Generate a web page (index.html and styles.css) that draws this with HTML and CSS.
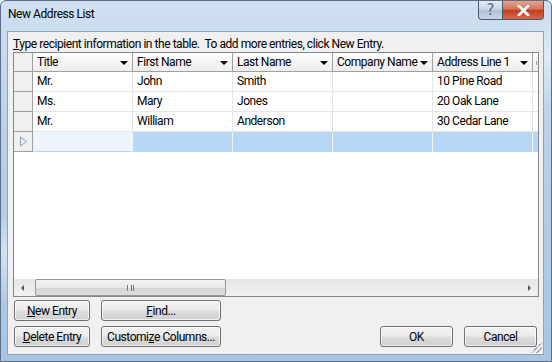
FILE: index.html
```html
<!DOCTYPE html>
<html lang="en">
<head>
  <meta charset="UTF-8" />
  <title>New Address List</title>
  <link rel="stylesheet" href="styles.css">
</head>
<body>
  <div class="window">
    <div class="titlebar">
      <span class="title">New Address List</span>
      <div class="caption-buttons">
        <div class="cap help">?</div>
        <div class="cap close">
          <svg width="13" height="11" viewBox="0 0 13 11">
            <path d="M2 1 L11 10 M11 1 L2 10" stroke="#fff" stroke-width="2.6" stroke-linecap="square"/>
          </svg>
        </div>
      </div>
    </div>

    <div class="client">
      <p class="hint"><u>T</u>ype recipient information in the table.&nbsp; To add more entries, click New Entry.</p>

      <div class="grid">
        <div class="grid-view">
          <div class="row head">
            <div class="cell rowhead"></div>
            <div class="cell col">Title<span class="arrow"></span></div>
            <div class="cell col">First Name<span class="arrow"></span></div>
            <div class="cell col">Last Name<span class="arrow"></span></div>
            <div class="cell col">Company Name<span class="arrow"></span></div>
            <div class="cell col">Address Line 1<span class="arrow"></span></div>
            <div class="cell col rest"><span class="cut-mark"></span></div>
          </div>
          <div class="row">
            <div class="cell rowhead"></div>
            <div class="cell col">Mr.</div>
            <div class="cell col">John</div>
            <div class="cell col">Smith</div>
            <div class="cell col"></div>
            <div class="cell col">10 Pine Road</div>
            <div class="cell col rest"></div>
          </div>
          <div class="row">
            <div class="cell rowhead"></div>
            <div class="cell col">Ms.</div>
            <div class="cell col">Mary</div>
            <div class="cell col">Jones</div>
            <div class="cell col"></div>
            <div class="cell col">20 Oak Lane</div>
            <div class="cell col rest"></div>
          </div>
          <div class="row">
            <div class="cell rowhead"></div>
            <div class="cell col">Mr.</div>
            <div class="cell col">William</div>
            <div class="cell col">Anderson</div>
            <div class="cell col"></div>
            <div class="cell col">30 Cedar Lane</div>
            <div class="cell col rest"></div>
          </div>
          <div class="row new">
            <div class="cell rowhead">
              <svg width="9" height="11" viewBox="0 0 9 11">
                <path d="M1.5 1 L7.5 5.5 L1.5 10 Z" fill="none" stroke="#8a9bb3" stroke-width="1"/>
              </svg>
            </div>
            <div class="cell col current"></div>
            <div class="cell col"></div>
            <div class="cell col"></div>
            <div class="cell col"></div>
            <div class="cell col"></div>
            <div class="cell col rest"></div>
          </div>
        </div>

        <div class="hscroll">
          <div class="sb-btn"><span class="tri left"></span></div>
          <div class="sb-track">
            <div class="sb-thumb"><span class="grip"></span></div>
          </div>
          <div class="sb-btn"><span class="tri right"></span></div>
        </div>
      </div>

      <div class="actions">
        <div class="left-actions">
          <button class="btn small"><u>N</u>ew Entry</button>
          <button class="btn wide"><u>F</u>ind...</button>
          <button class="btn small"><u>D</u>elete Entry</button>
          <button class="btn wide">Customi<u>z</u>e Columns...</button>
        </div>
        <div class="right-actions">
          <button class="btn ok">OK</button>
          <button class="btn ok">Cancel</button>
        </div>
      </div>
      <div class="grip-corner"></div>
    </div>
  </div>
</body>
</html>
```

FILE: styles.css
```css
* {
  margin: 0;
  padding: 0;
  box-sizing: border-box;
}
body {
  font-family: Roboto, "Noto Sans", "Liberation Sans", sans-serif;
  font-size: 12px;
  letter-spacing: -0.45px;
  color: #000;
  background: #fff;
  width: 552px;
  height: 362px;
  overflow: hidden;
}

/* рамка окна в стиле Vista */
.window {
  width: 552px;
  height: 362px;
  border: 1px solid #5c6f86;
  border-radius: 6px 6px 0 0;
  background:
    linear-gradient(160deg, rgba(255,255,255,0) 0%, rgba(255,255,255,0) 38%, rgba(255,255,255,0.45) 45%, rgba(255,255,255,0) 55%),
    linear-gradient(180deg, #cfe0f1 0%, #b8d0e8 40%, #a9c5e2 100%);
  display: flex;
  flex-direction: column;
}

.titlebar {
  height: 30px;
  display: flex;
  align-items: flex-start;
  justify-content: space-between;
  padding-left: 7px;
}
.title {
  margin-top: 6px;
  font-size: 12px;
  color: #000;
}
.caption-buttons {
  display: flex;
  margin-right: 7px;
}
.cap {
  height: 19px;
  border: 1px solid #4a5a6e;
  border-top: none;
  display: flex;
  align-items: center;
  justify-content: center;
}
.help {
  width: 24px;
  border-radius: 0 0 0 4px;
  border-right: none;
  background: linear-gradient(180deg, #e3ebf4 0%, #c6d3e1 50%, #aebfd3 51%, #c9d7e6 100%);
  color: #5a6b80;
  font-size: 15px;
  font-family: "DejaVu Sans", sans-serif;
  letter-spacing: 0;
}
.close {
  width: 42px;
  border-radius: 0 0 4px 0;
  background: linear-gradient(180deg, #e7a48f 0%, #d4755a 45%, #c0401f 52%, #d6684a 100%);
}

/* клиентская область */
.client {
  position: relative;
  flex: 1;
  margin: 0 7px 6px 6px;
  border: 1px solid #8ea3bd;
  background: #f0f0f0;
  padding: 4px 4px 0 5px;
}
.hint {
  height: 16px;
  line-height: 16px;
  white-space: nowrap;
}

/* таблица адресов */
.grid {
  height: 245px;
  border: 1px solid #828790;
  background: #fff;
  display: flex;
  flex-direction: column;
}
.grid-view {
  flex: 1;
  overflow: hidden;
}
.row {
  display: flex;
  height: 20px;
}
.row.head {
  height: 19px;
}
.cell {
  flex: none;
  height: 100%;
  border-right: 1px solid #e6e6e6;
  border-bottom: 1px solid #e6e6e6;
  padding-left: 4px;
  line-height: 19px;
  white-space: nowrap;
  overflow: hidden;
}
.col {
  width: 100px;
}
.col.rest {
  width: 20px;
  border-right: none;
}
.rowhead {
  width: 19px;
  padding: 0;
  background: #f0f0f0;
  border-right: 1px solid #a0a0a0;
  border-bottom: 1px solid #a0a0a0;
  display: flex;
  align-items: center;
  justify-content: center;
}
.head .cell {
  background: linear-gradient(180deg, #ffffff 0%, #f5f5f5 50%, #ededed 100%);
  border-right: 1px solid #a0a0a0;
  border-bottom: 1px solid #a0a0a0;
  position: relative;
  line-height: 18px;
}
.head .rowhead {
  background: #f0f0f0;
}
.cut-mark {
  position: absolute;
  left: 3px;
  top: 8px;
  width: 1px;
  height: 4px;
  background: #999;
}
.arrow {
  position: absolute;
  right: 4px;
  top: 8px;
  width: 0;
  height: 0;
  border-left: 4px solid transparent;
  border-right: 4px solid transparent;
  border-top: 4px solid #000;
}
.row.new .col {
  background: #b8d6f6;
  border-right-color: #f3f8fd;
  border-bottom-color: #b8d6f6;
}
.row.new .col.current {
  background: #eef4fc;
}

/* горизонтальная полоса прокрутки */
.hscroll {
  height: 17px;
  display: flex;
  background: linear-gradient(180deg, #e6e6e6 0%, #f2f2f2 100%);
}
.sb-btn {
  width: 17px;
  display: flex;
  align-items: center;
  justify-content: center;
}
.tri {
  width: 0;
  height: 0;
  border-top: 3px solid transparent;
  border-bottom: 3px solid transparent;
}
.tri.left {
  border-right: 3px solid #555;
}
.tri.right {
  border-left: 3px solid #555;
}
.sb-track {
  flex: 1;
  padding: 0 0 0 4px;
}
.sb-thumb {
  width: 191px;
  height: 17px;
  border: 1px solid #979797;
  border-radius: 2px;
  background: linear-gradient(180deg, #f3f3f3 0%, #e8e8e8 50%, #d6d6d6 51%, #dcdcdc 100%);
  display: flex;
  align-items: center;
  justify-content: center;
}
.grip {
  width: 7px;
  height: 6px;
  border-left: 1px solid #777;
  border-right: 1px solid #777;
  background: linear-gradient(90deg, transparent 3px, #777 3px, #777 4px, transparent 4px);
}

/* кнопки */
.actions {
  display: flex;
  justify-content: space-between;
  margin-top: 3px;
}
.left-actions {
  display: grid;
  grid-template-columns: 76px 120px;
  column-gap: 11px;
  row-gap: 5px;
  margin-left: 1px;
}
.right-actions {
  display: flex;
  align-items: flex-end;
  gap: 11px;
  margin-right: 2px;
}
.btn {
  height: 21px;
  font-family: inherit;
  font-size: 12px;
  letter-spacing: inherit;
  white-space: nowrap;
  color: #000;
  border: 1px solid #707070;
  border-radius: 3px;
  background: linear-gradient(180deg, #f2f2f2 0%, #ebebeb 48%, #dddddd 52%, #cfcfcf 100%);
  box-shadow: inset 0 0 0 1px rgba(255,255,255,0.7);
}
.btn.ok {
  width: 73px;
}
.grip-corner {
  position: absolute;
  right: 1px;
  bottom: 1px;
  width: 10px;
  height: 10px;
  background: linear-gradient(135deg, transparent 45%, #9aa6b4 45%, #9aa6b4 52%, transparent 52%, transparent 70%, #9aa6b4 70%, #9aa6b4 77%, transparent 77%);
}
```
